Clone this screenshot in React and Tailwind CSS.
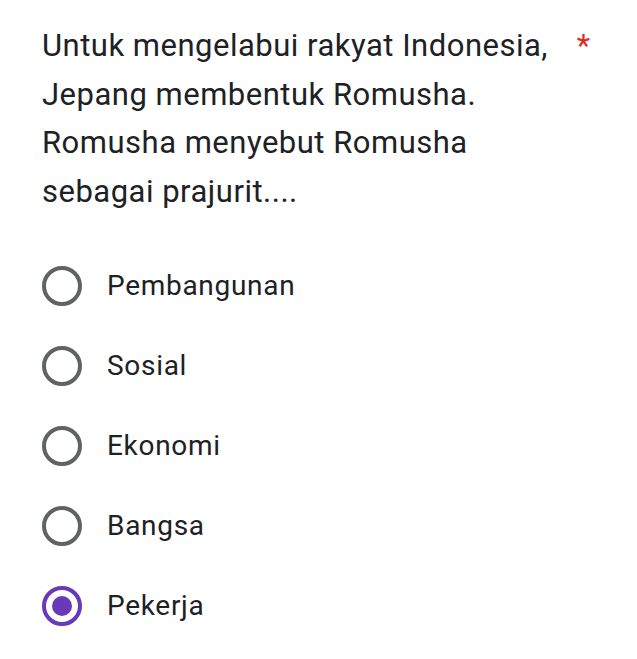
import React from "react";

const options = ["Pembangunan", "Sosial", "Ekonomi", "Bangsa", "Pekerja"];

function Radio({ checked }) {
  if (checked) {
    return (
      <div className="w-[40px] h-[40px] rounded-full border-[4px] border-[#673ab7] flex items-center justify-center shrink-0">
        <div className="w-[20px] h-[20px] rounded-full bg-[#673ab7]" />
      </div>
    );
  }
  return <div className="w-[40px] h-[40px] rounded-full border-[4px] border-[#5f6368] shrink-0" />;
}

export default function App() {
  return (
    <div className="w-[637px] h-[659px] bg-white font-['Roboto',sans-serif] text-[#202124]">
      <div className="pl-[42px] pr-[47px] pt-[22px] flex">
        <div className="flex-1 text-[31px] tracking-[0.5px] leading-[48.5px] pr-[16px]">
          Untuk mengelabui rakyat Indonesia, Jepang membentuk Romusha. Romusha menyebut Romusha sebagai prajurit....
        </div>
        <div className="text-[31px] leading-[48.5px] text-[#d93025]">*</div>
      </div>
      <div className="pl-[42px] pt-[30px] flex flex-col">
        {options.map((o, i) => (
          <div key={o} className="h-[80px] flex items-center gap-[25px]">
            <Radio checked={i === 4} />
            <span className="text-[28px] tracking-[0.7px]">{o}</span>
          </div>
        ))}
      </div>
    </div>
  );
}
